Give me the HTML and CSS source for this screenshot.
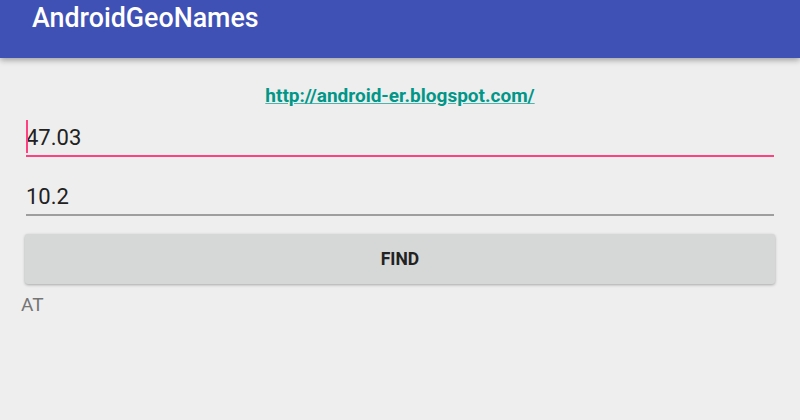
FILE: index.html
```html
<!DOCTYPE html>
<html>
<head>
<meta charset="utf-8">
<link rel="stylesheet" href="styles.css">
</head>
<body>
<header class="toolbar"><span class="title">AndroidGeoNames</span></header>
<main class="content">
  <div class="link-row"><a class="link" href="#">http://android-er.blogspot.com/</a></div>
  <div class="field focused"><span class="cursor"></span><span class="value">47.03</span></div>
  <div class="field"><span class="value">10.2</span></div>
  <button class="btn">FIND</button>
  <div class="result">AT</div>
</main>
</body>
</html>
```
FILE: styles.css
```css
html, body { margin: 0; padding: 0; }
body {
  width: 800px; height: 420px; overflow: hidden;
  background: #eeeeee;
  font-family: Roboto, "Noto Sans", sans-serif;
}
.toolbar {
  height: 58px;
  background: #3f51b5;
  box-shadow: 0 2px 6px rgba(0,0,0,0.35);
  display: flex;
  align-items: flex-start;
  padding-left: 32px;
  position: relative;
}
.title {
  color: #fff;
  font-size: 26.8px;
  font-weight: 500;
  line-height: 36px;
}
.content {
  padding: 25px 26px 0 26px;
  display: flex;
  flex-direction: column;
}
.link-row { text-align: center; height: 35px; }
.link {
  color: #009688;
  font-weight: 700;
  font-size: 19px;
  line-height: 26px;
  text-decoration: underline;
  text-decoration-color: #4db6ac;
}
.field {
  position: relative;
  height: 40px;
  border-bottom: 2px solid #9e9e9e;
  display: flex;
  align-items: flex-end;
  margin-bottom: 15px;
}
.field + .field { height: 42px; border-bottom-width: 2px; margin-bottom: 17px; }
.field.focused { border-bottom-color: #ff4081; height: 37px; }
.value {
  font-size: 22px;
  color: #212121;
  line-height: 28px;
  padding-bottom: 3px;
}
.cursor {
  position: absolute;
  left: 0; top: 2px;
  width: 2px; height: 33px;
  background: #ff4081;
}
.btn {
  height: 50px;
  margin: 1px -1px 0;
  border: none;
  border-radius: 3px;
  background: #d6d7d7;
  box-shadow: 0 1px 3px rgba(0,0,0,0.3);
  font-family: Roboto, sans-serif;
  font-weight: 700;
  font-size: 17.5px;
  color: #222;
}
.result {
  margin-left: -5px;
  margin-top: 9px;
  font-size: 19px;
  color: #757575;
}
```
